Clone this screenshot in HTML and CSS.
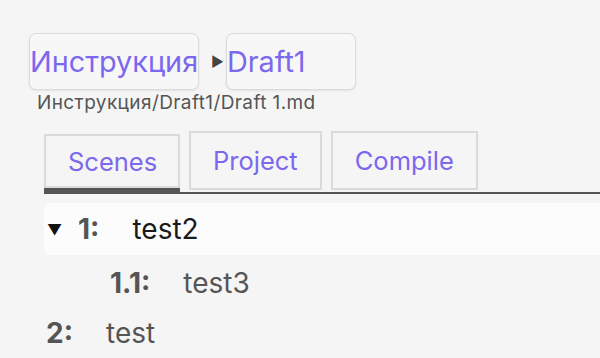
FILE: index.html
```html
<!DOCTYPE html>
<html lang="ru">
<head>
    <meta charset="UTF-8">
    <title>Draft1</title>
    <link rel="stylesheet" href="styles.css">
</head>
<body>
    <div class="breadcrumbs">
        <button class="crumb">Инструкция</button>
        <span class="crumb-arrow">▶</span>
        <button class="crumb crumb-last">Draft1</button>
    </div>
    <div class="file-path">Инструкция/Draft1/Draft 1.md</div>

    <div class="tabs">
        <button class="tab active">Scenes</button>
        <button class="tab">Project</button>
        <button class="tab">Compile</button>
    </div>

    <ul class="tree">
        <li class="row highlighted">
            <span class="toggle">▼</span>
            <span class="num">1:</span>
            <span class="title dark">test2</span>
        </li>
        <li class="row child">
            <span class="num">1.1:</span>
            <span class="title">test3</span>
        </li>
        <li class="row top">
            <span class="num">2:</span>
            <span class="title">test</span>
        </li>
    </ul>
</body>
</html>
```

FILE: styles.css
```css
* {
    margin: 0;
    padding: 0;
    box-sizing: border-box;
}

body {
    font-family: Inter, 'Noto Sans', sans-serif;
    background: #f5f5f5;
    color: #555;
    overflow: hidden;
}

button {
    font-family: inherit;
}

.breadcrumbs {
    display: flex;
    align-items: center;
    padding: 33px 0 0 29px;
}

.crumb {
    height: 57px;
    background: #f7f7f7;
    border: 1px solid #dadada;
    border-radius: 7px;
    box-shadow: 0 1px 2px rgba(0,0,0,0.08);
    color: #7b68ee;
    font-size: 28.8px;
    text-align: left;
    padding: 0;
}

.crumb-last {
    width: 130px;
}

.crumb-arrow {
    font-size: 14px;
    color: #444;
    margin: 0 2px 0 12px;
}

.file-path {
    font-size: 19px;
    letter-spacing: 0.4px;
    margin: 2px 0 0 37px;
    color: #555;
    line-height: 22px;
}

.tabs {
    display: flex;
    align-items: flex-start;
    gap: 9px;
    margin: 15px 0 0 44px;
    padding-top: 2px;
    border-bottom: 2px solid #555;
    height: 65px;
}

.tab {
    height: 59px;
    padding: 0 22px;
    background: #f5f5f5;
    border: 2px solid #dadada;
    color: #7b68ee;
    font-size: 25.5px;
}

.tab.active {
    height: 54px;
    width: 136px;
    margin-top: 3px;
    box-shadow: 0 4px 0 #555;
}

.tree {
    list-style: none;
    margin: 9px 0 0 44px;
    font-size: 28px;
}

.row {
    display: flex;
    align-items: center;
    height: 52px;
}

.row.highlighted {
    background: #fcfcfc;
    border-radius: 6px 0 0 6px;
    padding-left: 3px;
}

.row.child {
    padding-left: 66px;
    height: 55px;
}

.row.top {
    padding-left: 2px;
    height: 46px;
}

.toggle {
    font-size: 15px;
    color: #111;
    width: 31px;
}

.num {
    font-weight: 700;
    color: #555;
    margin-right: 33px;
}

.title {
    color: #555;
}

.title.dark {
    color: #1a1a1a;
}
```
